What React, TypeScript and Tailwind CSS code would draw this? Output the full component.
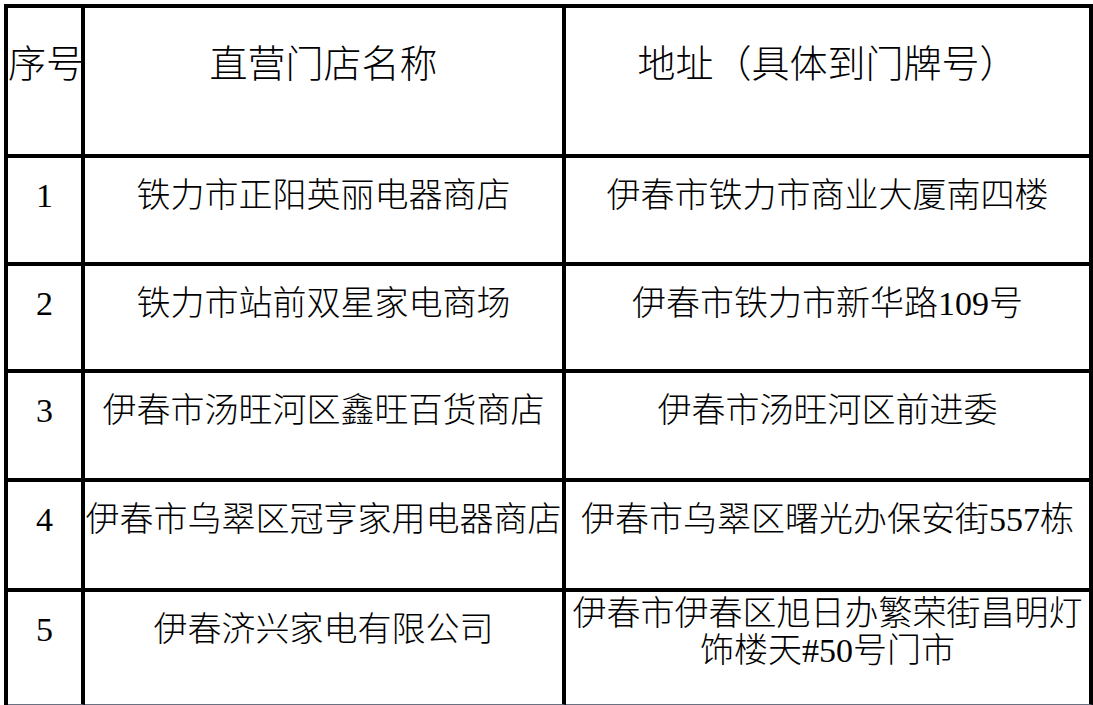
import React from "react"

type Row = {
  no: string
  name: string
  addr: React.ReactNode
  h: string
  addrCls?: string
}

const rows: Row[] = [
  { no: "1", name: "铁力市正阳英丽电器商店", addr: "伊春市铁力市商业大厦南四楼", h: "h-[108px]" },
  { no: "2", name: "铁力市站前双星家电商场", addr: "伊春市铁力市新华路109号", h: "h-[107px]" },
  { no: "3", name: "伊春市汤旺河区鑫旺百货商店", addr: "伊春市汤旺河区前进委", h: "h-[109px]" },
  { no: "4", name: "伊春市乌翠区冠亨家用电器商店", addr: "伊春市乌翠区曙光办保安街557栋", h: "h-[110px]" },
  {
    no: "5",
    name: "伊春济兴家电有限公司",
    addr: (
      <>
        伊春市伊春区旭日办繁荣街昌明灯
        <br />
        饰楼天#50号门市
      </>
    ),
    h: "h-[113px]",
    addrCls: "pt-[3px] leading-[37px]",
  },
]

export default function App() {
  return (
    <div className="w-[1093px] h-[705px] overflow-hidden bg-white text-black font-light font-[family-name:'Liberation_Serif','Noto_Sans_CJK_SC',serif]">
      <div className="ml-[4px] mt-[4px] grid w-[1089px] grid-cols-[77px_481px_527px] border-l-4 border-t-4 border-black">
        {/* header */}
        <div className="h-[150px] border-r-4 border-b-4 border-black pt-[36px] text-center text-[38px] leading-[40px] whitespace-nowrap">
          序号
        </div>
        <div className="h-[150px] border-r-4 border-b-4 border-black pt-[36px] text-center text-[38px] leading-[40px] whitespace-nowrap">
          直营门店名称
        </div>
        <div className="h-[150px] border-r-4 border-b-4 border-black pt-[36px] text-center text-[38px] leading-[40px] whitespace-nowrap">
          地址（具体到门牌号）
        </div>

        {rows.map((r, i) => {
          const last = i === rows.length - 1
          const edge = last ? "border-b border-b-gray-500" : "border-b-4"
          return (
            <React.Fragment key={r.no}>
              <div className={`${r.h} ${edge} border-r-4 border-black pt-[20px] text-center text-[34px] leading-[35px]`}>
                {r.no}
              </div>
              <div className={`${r.h} ${edge} border-r-4 border-black pt-[20px] text-center text-[34px] leading-[35px] whitespace-nowrap`}>
                {r.name}
              </div>
              <div className={`${r.h} ${edge} border-r-4 border-black text-center text-[34px] whitespace-nowrap ${r.addrCls ?? "pt-[20px] leading-[35px]"}`}>
                {r.addr}
              </div>
            </React.Fragment>
          )
        })}
      </div>
    </div>
  )
}
